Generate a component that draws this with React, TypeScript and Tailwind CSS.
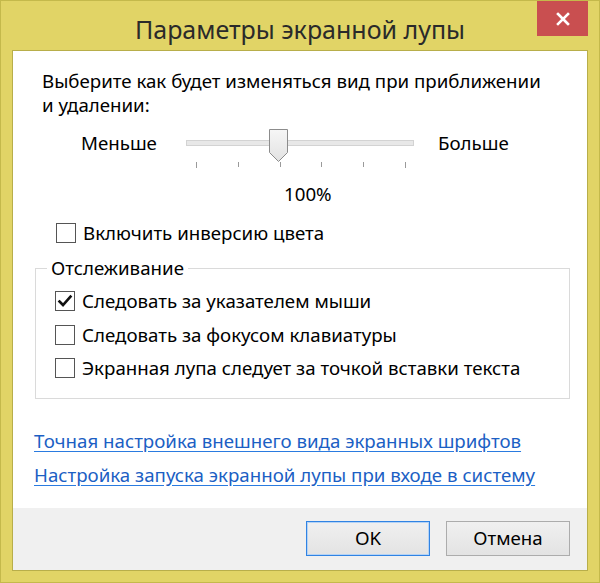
import React from "react";

const font = { fontFamily: '"Noto Sans", "Open Sans", sans-serif' };

function CheckBox({ checked }: { checked?: boolean }) {
  return (
    <div className="w-[20px] h-[20px] border border-[#555555] bg-white flex items-center justify-center shrink-0">
      {checked && (
        <svg width="16" height="16" viewBox="0 0 16 16">
          <path d="M2.5 8.5 L6 12 L13.5 3.5" fill="none" stroke="#111" strokeWidth="2.6" strokeLinecap="square" />
        </svg>
      )}
    </div>
  );
}

function CheckRow({ label, checked, className = "" }: { label: string; checked?: boolean; className?: string }) {
  return (
    <div className={"flex items-center h-[24px] " + className}>
      <CheckBox checked={checked} />
      <span className="ml-[7px] text-[18.7px] leading-[24px] text-black whitespace-nowrap">{label}</span>
    </div>
  );
}

export default function App() {
  return (
    <div className="w-[600px] h-[583px] bg-[#e1d466] border border-[#c4b94b] flex flex-col" style={font}>
      <div className="relative h-[49px] shrink-0 flex items-center justify-center">
        <span className="text-[25px] leading-none text-[#2a2a2a] mt-[8px]">Параметры экранной лупы</span>
        <div className="absolute top-0 right-[11px] w-[51px] h-[35px] bg-[#c94f50] flex items-center justify-center">
          <svg width="14" height="14" viewBox="0 0 14 14">
            <path d="M2 2 L12 12 M12 2 L2 12" stroke="#fff" strokeWidth="2.6" strokeLinecap="square" />
          </svg>
        </div>
      </div>
      <div className="mx-[11px] mb-[11px] flex-1 border border-[#b8ae4a] bg-white flex flex-col">
        <div className="mt-[18px] ml-[29px] text-[18.7px] leading-[24px] text-black whitespace-nowrap">
          Выберите как будет изменяться вид при приближении
          <br />и удалении:
        </div>
        <div className="mt-[14px] h-[24px] flex items-center pl-[68px]">
          <span className="w-[105px] text-[18.7px] leading-[24px] text-black">Меньше</span>
          <div className="relative w-[228px] h-[6px] border border-[#d3d3d3] bg-[#e8e8e8]">
            <svg className="absolute left-[82px] top-[-12px]" width="20" height="34" viewBox="0 0 20 34">
              <defs>
                <linearGradient id="tg" x1="0" y1="0" x2="0" y2="1">
                  <stop offset="0" stopColor="#f6f6f6" />
                  <stop offset="1" stopColor="#e2e2e2" />
                </linearGradient>
              </defs>
              <path d="M0.5 0.5 H18.5 V23.5 L9.5 32.5 L0.5 23.5 Z" fill="url(#tg)" stroke="#8c8c8c" strokeWidth="1" />
            </svg>
          </div>
          <span className="ml-[24px] text-[18.7px] leading-[24px] text-black">Больше</span>
        </div>
        <div className="mt-[7px] ml-[183px] w-[210px] h-[6px] flex justify-between items-start">
          <div className="w-px h-[6px] bg-[#9a9a9a]" />
          <div className="w-px h-[5px] bg-[#9a9a9a]" />
          <div className="w-px h-[5px] bg-[#9a9a9a]" />
          <div className="w-px h-[5px] bg-[#9a9a9a]" />
          <div className="w-px h-[5px] bg-[#9a9a9a]" />
          <div className="w-px h-[6px] bg-[#9a9a9a]" />
        </div>
        <div className="mt-[14px] ml-[271px] text-[18.7px] leading-[24px] text-black">100%</div>
        <CheckRow className="mt-[15px] ml-[43px]" label="Включить инверсию цвета" />
        <fieldset className="mt-[11px] ml-[22px] mr-[17px] border border-[#dadada] pl-[19px] pb-[18px]">
          <legend className="-ml-[8px] px-[4px] text-[18.7px] leading-[24px] text-black">Отслеживание</legend>
          <CheckRow className="mt-[9px]" checked label="Следовать за указателем мыши" />
          <CheckRow className="mt-[10px]" label="Следовать за фокусом клавиатуры" />
          <CheckRow className="mt-[9px]" label="Экранная лупа следует за точкой вставки текста" />
        </fieldset>
        <div className="mt-[30px] ml-[21px] flex flex-col gap-[10px] items-start">
          <a className="text-[18.7px] leading-[24px] text-[#1c5fc4] underline decoration-[#2a7be0] underline-offset-[3px] cursor-pointer whitespace-nowrap">
            Точная настройка внешнего вида экранных шрифтов
          </a>
          <a className="text-[18.7px] leading-[24px] text-[#1c5fc4] underline decoration-[#2a7be0] underline-offset-[3px] cursor-pointer whitespace-nowrap">
            Настройка запуска экранной лупы при входе в систему
          </a>
        </div>
        <div className="mt-auto h-[62px] bg-[#f0f0f0] flex items-start justify-end pt-[13px] pr-[17px] gap-[16px]">
          <button className="w-[124px] h-[35px] border border-[#3083e3] shadow-[inset_0_0_0_1px_#b5d3f5] bg-gradient-to-b from-[#f0f0f0] to-[#e3e3e3] text-[18.7px] text-black">
            OK
          </button>
          <button className="w-[124px] h-[35px] border border-[#acacac] bg-gradient-to-b from-[#f0f0f0] to-[#e3e3e3] text-[18.7px] text-black">
            Отмена
          </button>
        </div>
      </div>
    </div>
  );
}
